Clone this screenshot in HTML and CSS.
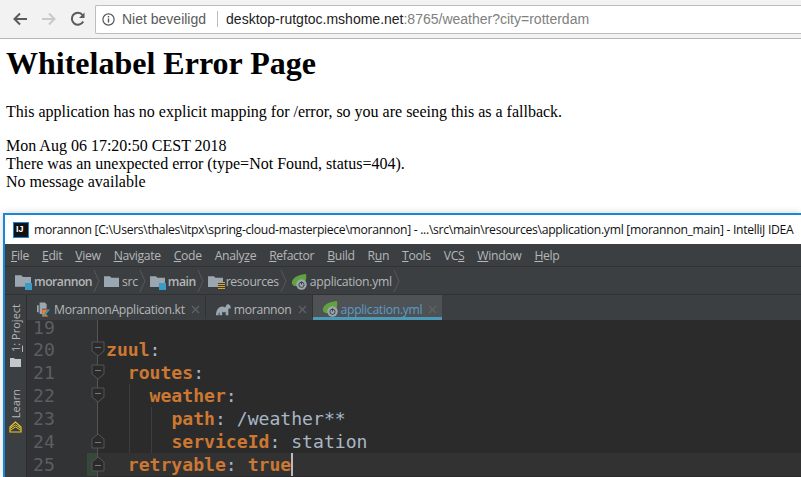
FILE: index.html
```html
<!DOCTYPE html>
<html lang="en">
<head>
  <meta charset="UTF-8" />
  <title>Whitelabel Error Page</title>
  <link rel="stylesheet" href="styles.css">
</head>
<body>

  <svg class="defs" width="0" height="0">
    <symbol id="folder" viewBox="0 0 18 16">
      <path d="M0 1h7l2 2h9v11H0z" fill="#9aa7b0"/>
    </symbol>
    <symbol id="spring" viewBox="0 0 16 16">
      <path d="M1 10C0 5 5 1 15 0c1 6-1 10-5 12H3z" fill="#62a13f"/>
      <circle cx="10.5" cy="10.5" r="5.2" fill="#9aa7b0"/>
      <circle cx="10.5" cy="10.8" r="2.6" fill="none" stroke="#3c3f41" stroke-width="1"/>
      <path d="M10.5 7.5v3" stroke="#3c3f41" stroke-width="1"/>
    </symbol>
    <symbol id="close" viewBox="0 0 9 9">
      <path d="M1 1l7 7M8 1L1 8" stroke="#5f6366" stroke-width="1.2" fill="none"/>
    </symbol>
    <symbol id="crumb" viewBox="0 0 7 22">
      <path d="M1 0l5 11-5 11" stroke="#55585a" fill="none"/>
    </symbol>
    <symbol id="fold-open" viewBox="0 0 14 16">
      <path d="M1 1h12v9l-6 5-6-5z" fill="#2b2b2b" stroke="#555" />
      <path d="M4 6.5h6" stroke="#777"/>
    </symbol>
    <symbol id="fold-end" viewBox="0 0 14 16">
      <path d="M1 15h12V6L7 1 1 6z" fill="#2b2b2b" stroke="#555"/>
      <path d="M4 9.5h6" stroke="#777"/>
    </symbol>
  </svg>

  <header class="toolbar">
    <svg class="nav-icon" width="16" height="16" viewBox="0 0 16 16"><path d="M15 8H3M8 2.5L2.5 8 8 13.5" fill="none" stroke="#5a5a5a" stroke-width="2"/></svg>
    <svg class="nav-icon" width="16" height="16" viewBox="0 0 16 16"><path d="M1 8h12M8 2.5L13.5 8 8 13.5" fill="none" stroke="#c9c9c9" stroke-width="2"/></svg>
    <svg class="nav-icon reload" width="16" height="16" viewBox="0 0 16 16"><path d="M13.2 10.5A6 6 0 1 1 12.6 4" fill="none" stroke="#5a5a5a" stroke-width="2"/><path d="M14.5 1.5v5.5H9z" fill="#5a5a5a"/></svg>
    <div class="omnibox">
      <svg width="13" height="13" viewBox="0 0 13 13"><circle cx="6.5" cy="6.5" r="5.6" fill="none" stroke="#555" stroke-width="1.2"/><path d="M6.5 5.5v4M6.5 3v1.4" stroke="#555" stroke-width="1.4"/></svg>
      <span class="secure">Niet beveiligd</span>
      <span class="sep"></span>
      <span class="host">desktop-rutgtoc.mshome.net</span><span class="rest">:8765/weather?city=rotterdam</span>
    </div>
  </header>

  <main class="error-page">
    <h1>Whitelabel Error Page</h1>
    <p>This application has no explicit mapping for /error, so you are seeing this as a fallback.</p>
    <div>Mon Aug 06 17:20:50 CEST 2018</div>
    <div>There was an unexpected error (type=Not Found, status=404).</div>
    <div>No message available</div>
  </main>

  <section class="ide">
    <div class="titlebar">
      <span class="ij-logo">IJ</span>
      <span>morannon [C:\Users\thales\itpx\spring-cloud-masterpiece\morannon] - ...\src\main\resources\application.yml [morannon_main] - IntelliJ IDEA</span>
    </div>

    <nav class="menu">
      <span><u>F</u>ile</span>
      <span><u>E</u>dit</span>
      <span><u>V</u>iew</span>
      <span><u>N</u>avigate</span>
      <span><u>C</u>ode</span>
      <span>Analy<u>z</u>e</span>
      <span><u>R</u>efactor</span>
      <span><u>B</u>uild</span>
      <span>R<u>u</u>n</span>
      <span><u>T</u>ools</span>
      <span>VC<u>S</u></span>
      <span><u>W</u>indow</span>
      <span><u>H</u>elp</span>
    </nav>

    <div class="crumbs">
      <span class="crumb">
        <span class="folder-wrap"><svg width="16" height="15"><use href="#folder"/></svg><i class="module-dot"></i></span>
        <b>morannon</b>
      </span>
      <svg class="chev" width="7" height="22"><use href="#crumb"/></svg>
      <span class="crumb">
        <svg width="15" height="14"><use href="#folder"/></svg>
        src
      </span>
      <svg class="chev" width="7" height="22"><use href="#crumb"/></svg>
      <span class="crumb">
        <span class="folder-wrap"><svg width="15" height="14"><use href="#folder"/></svg><i class="module-dot"></i></span>
        <b>main</b>
      </span>
      <svg class="chev" width="7" height="22"><use href="#crumb"/></svg>
      <span class="crumb">
        <span class="folder-wrap"><svg width="15" height="14"><use href="#folder"/></svg><i class="res-lines"></i></span>
        resources
      </span>
      <svg class="chev" width="7" height="22"><use href="#crumb"/></svg>
      <span class="crumb">
        <svg width="16" height="16"><use href="#spring"/></svg>
        application.yml
      </span>
      <svg class="chev" width="7" height="22"><use href="#crumb"/></svg>
    </div>

    <div class="workspace">
      <aside class="side-tools">
        <span class="side-label"><u>1</u>: Project</span>
        <svg width="11" height="10" viewBox="0 0 11 10"><path d="M0 1h4l1 1h6v8H0z" fill="#c4c7c9"/></svg>
        <span class="side-label learn">Learn</span>
        <svg width="13" height="13" viewBox="0 0 13 13"><path d="M6.5 1L1 6v5h11V6z" fill="none" stroke="#e8c72a" stroke-width="1.2"/><path d="M1.5 7l5-3 5 3M1.5 9l5-3 5 3" fill="none" stroke="#e8c72a"/></svg>
      </aside>

      <div class="editor-pane">
        <div class="tabs">
          <div class="tab">
            <svg width="14" height="15" viewBox="0 0 16 16"><path d="M0 3h2v8H0zM3 0h6l2 2v5H6v6H3z" fill="#9aa7b0"/><path d="M6 8h7l-4 4 4 4H6z" fill="#f08020"/><path d="M9 12l4-4h2L8 16H6z" fill="#2d9ee0"/></svg>
            MorannonApplication.kt
            <svg class="tab-x" width="9" height="9"><use href="#close"/></svg>
          </div>
          <div class="tab">
            <svg width="15" height="13" viewBox="0 0 17 13"><path d="M0 13C0 7 3 3 7 3c2 0 3 1 4 1 0-3 2-4 4-3 2 1 2 4 1 5l-1-1c-1 0-1 1-1 2v6h-3V9c-1 1-3 1-4 0v4H4v-3c-1 0-1 1-1 3z" fill="#9aa7b0"/></svg>
            morannon
            <svg class="tab-x" width="9" height="9"><use href="#close"/></svg>
          </div>
          <div class="tab tab-active">
            <svg width="16" height="16"><use href="#spring"/></svg>
            application.yml
            <svg class="tab-x" width="9" height="9"><use href="#close"/></svg>
          </div>
        </div>

        <div class="editor">
          <div class="line first"><span class="num">19</span><span class="code"></span></div>
          <div class="line"><span class="num">20</span><span class="code"><svg class="fold" width="14" height="16"><use href="#fold-open"/></svg><b>zuul</b>:</span></div>
          <div class="line"><span class="num">21</span><span class="code"><svg class="fold" width="14" height="16"><use href="#fold-open"/></svg>  <b>routes</b>:</span></div>
          <div class="line"><span class="num">22</span><span class="code"><i class="guide g1"></i><svg class="fold" width="14" height="16"><use href="#fold-open"/></svg>    <b>weather</b>:</span></div>
          <div class="line"><span class="num">23</span><span class="code"><i class="guide g1"></i><i class="guide g2"></i>      <b>path</b>: /weather**</span></div>
          <div class="line"><span class="num">24</span><span class="code"><i class="guide g1"></i><i class="guide g2"></i><svg class="fold" width="14" height="16"><use href="#fold-end"/></svg>      <b>serviceId</b>: station</span></div>
          <div class="line current"><span class="num"><i class="changed"></i>25</span><span class="code"><svg class="fold" width="14" height="16"><use href="#fold-end"/></svg>  <b>retryable</b>: <b>true</b><i class="caret"></i></span></div>
          <div class="line"><span class="num"></span><span class="code"></span></div>
        </div>
      </div>
    </div>
  </section>

</body>
</html>
```

FILE: styles.css
```css
* {
  box-sizing: border-box;
}

html, body {
  height: 477px;
  margin: 0;
  overflow: hidden;
  background: #fff;
}

.defs {
  position: absolute;
}

/* browser chrome */
.toolbar {
  display: flex;
  align-items: center;
  height: 39px;
  padding-left: 12px;
  background: #f2f2f2;
  border-bottom: 1px solid #b6b6b6;
}

.nav-icon {
  margin-right: 13px;
}

.nav-icon.reload {
  margin-right: 9px;
}

.omnibox {
  display: flex;
  align-items: center;
  flex: 1;
  height: 29px;
  padding-left: 6px;
  background: #fff;
  border: 1px solid #bdbdbd;
  border-right: 0;
  border-radius: 2px 0 0 2px;
  font: 14px "Liberation Sans", sans-serif;
  white-space: nowrap;
}

.secure {
  margin-left: 7px;
  color: #5a5a5a;
}

.sep {
  width: 1px;
  height: 16px;
  margin: 0 8px 0 11px;
  background: #bdbdbd;
}

.host {
  color: #222;
}

.rest {
  color: #808080;
}

/* error page */
.error-page {
  height: 174px;
  padding: 6px 6px 0;
  font: 16px/18px "Liberation Serif", serif;
  color: #000;
}

.error-page h1 {
  margin: 0 0 21px;
  font-size: 32px;
  line-height: 37px;
}

.error-page p {
  margin: 0 0 16px;
}

/* ide window */
.ide {
  display: flex;
  flex-direction: column;
  height: 264px;
  margin-left: 3px;
  background: #2b2b2b;
  border-top: 2px solid #1a86d8;
  border-left: 2px solid #1a86d8;
  box-shadow: 0 0 7px rgba(0,0,0,0.18);
}

.titlebar {
  display: flex;
  align-items: center;
  flex: none;
  height: 29px;
  padding-left: 8px;
  background: #fff;
  color: #111;
  font: 12.2px "Open Sans", sans-serif;
  letter-spacing: -0.31px;
  white-space: nowrap;
}

.ij-logo {
  width: 16px;
  height: 16px;
  margin-right: 5px;
  padding: 1px 0 0 2px;
  background: #111;
  border: 1px solid #1a86d8;
  color: #fff;
  font: bold 9px/10px "Liberation Sans", sans-serif;
  letter-spacing: 0;
}

.menu {
  display: flex;
  align-items: center;
  gap: 13px;
  flex: none;
  height: 23px;
  padding-left: 6px;
  background: #3c3f41;
  border-bottom: 1px solid #323232;
  color: #b4b7b9;
  font: 12.2px "Open Sans", sans-serif;
  letter-spacing: -0.33px;
}

.crumbs {
  display: flex;
  align-items: center;
  flex: none;
  height: 28px;
  padding: 2px 0 0 10px;
  background: #3c3f41;
  border-bottom: 1px solid #323232;
  color: #b4b7b9;
  font: 12.2px "Open Sans", sans-serif;
  letter-spacing: -0.3px;
}

.crumbs b {
  font-weight: 600;
  letter-spacing: -0.5px;
}

.crumb {
  display: flex;
  align-items: center;
  gap: 3px;
}

.chev {
  flex: none;
  margin: -2px 4px 0 1px;
}

.folder-wrap {
  position: relative;
  display: flex;
}

.module-dot {
  position: absolute;
  right: -1px;
  bottom: -1px;
  width: 7px;
  height: 7px;
  background: #3a9bc7;
}

.res-lines {
  position: absolute;
  right: -2px;
  bottom: -1px;
  width: 7px;
  height: 8px;
  background: repeating-linear-gradient(#d6a23a 0 1px, #3c3f41 1px 2px);
}

.workspace {
  display: flex;
  flex: 1;
  min-height: 0;
}

.side-tools {
  display: flex;
  flex-direction: column;
  align-items: center;
  flex: none;
  width: 22px;
  padding-top: 9px;
  background: #3c3f41;
  border-right: 1px solid #2d2d2d;
  color: #b4b7b9;
  font: 11px "Open Sans", sans-serif;
}

.side-label {
  writing-mode: vertical-rl;
  transform: rotate(180deg);
  margin-bottom: 5px;
}

.learn {
  margin-top: 22px;
  margin-bottom: 3px;
}

.editor-pane {
  flex: 1;
  min-width: 0;
}

.tabs {
  display: flex;
  height: 25px;
  background: #3c3f41;
  color: #b4b7b9;
  font: 12.2px "Open Sans", sans-serif;
  letter-spacing: -0.3px;
}

.tab {
  display: flex;
  align-items: center;
  gap: 3px;
  padding: 6px 5px 0 10px;
  border-right: 1px solid #323232;
  border-bottom: 3px solid transparent;
  white-space: nowrap;
}

.tab-x {
  margin-left: 3px;
}

.tab-active {
  padding-left: 9px;
  background: #4e5254;
  border-right: 0;
  border-bottom-color: #4a9ab8;
  color: #5c9ac9;
}

/* code */
.editor {
  height: 157px;
  overflow: hidden;
  font: 18.1px/22.85px "DejaVu Sans Mono", monospace;
  color: #a9b7c6;
}

.line {
  display: flex;
  height: 22.85px;
}

.first {
  margin-top: -4.4px;
}

.num {
  position: relative;
  flex: none;
  width: 70px;
  padding: 1px 0 0 6px;
  background: #313335;
  color: #5c5f61;
}

.code {
  position: relative;
  flex: 1;
  padding: 1px 0 0 8px;
  border-left: 1px solid #555;
  white-space: pre;
}

.code b {
  color: #cc7832;
}

.fold {
  position: absolute;
  left: -7px;
  top: 3px;
}

.guide {
  position: absolute;
  top: 0;
  bottom: 0;
  width: 1px;
  background: #3d3d3d;
}

.g1 {
  left: 31px;
}

.g2 {
  left: 53px;
}

.current .code {
  background: #323232;
}

.changed {
  position: absolute;
  right: 0;
  top: 0;
  bottom: 0;
  width: 10px;
  background: #35483a;
}

.caret {
  display: inline-block;
  width: 2px;
  height: 22.85px;
  margin-top: -1px;
  vertical-align: top;
  background: #bbb;
}
```
